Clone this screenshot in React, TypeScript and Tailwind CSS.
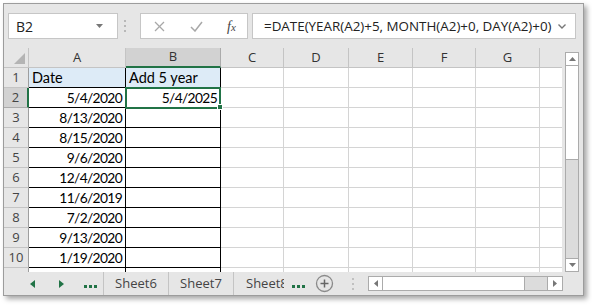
import React from "react";

const COLS = [
  { w: 25, label: "" },
  { w: 97, label: "A" },
  { w: 95, label: "B" },
  { w: 63, label: "C" },
  { w: 65, label: "D" },
  { w: 64, label: "E" },
  { w: 63, label: "F" },
  { w: 64, label: "G" },
  { w: 22, label: "" },
];

const DATES = [
  "5/4/2020",
  "8/13/2020",
  "8/15/2020",
  "9/6/2020",
  "12/4/2020",
  "11/6/2019",
  "7/2/2020",
  "9/13/2020",
  "1/19/2020",
];

const cellFont = { fontFamily: "Lato, 'Liberation Sans', sans-serif" };
const uiFont = { fontFamily: "'Open Sans', 'Noto Sans', sans-serif" };

function ColHeaders() {
  return (
    <div className="flex h-[20px]" style={uiFont}>
      {COLS.map((c, i) => {
        const sel = i === 2;
        return (
          <div
            key={i}
            style={{ width: c.w }}
            className={`relative flex shrink-0 items-center justify-center border-r border-b text-[13px] text-[#333] ${
              sel
                ? "bg-[#d2d2d2] border-b-[#217346] border-b-2 border-r-[#ababab]"
                : "bg-[#e6e6e6] border-[#c4c4c4]"
            } ${i === 8 ? "border-r-0" : ""}`}
          >
            {i === 0 ? (
              <svg width="11" height="11" viewBox="0 0 11 11" className="absolute bottom-[3px] right-[3px]">
                <polygon points="11,0 11,11 0,11" fill="#b4b4b4" />
              </svg>
            ) : (
              c.label
            )}
          </div>
        );
      })}
    </div>
  );
}

function Row({ n }: { n: number }) {
  const selRow = n === 2;
  return (
    <div className="flex h-[20px]">
      {COLS.map((c, i) => {
        if (i === 0) {
          return (
            <div
              key={i}
              style={{ width: c.w, ...uiFont }}
              className={`flex shrink-0 items-center justify-center border-b border-r text-[13px] text-[#444] ${
                selRow
                  ? "bg-[#d2d2d2] border-b-[#ababab] border-r-[#217346] border-r-2"
                  : "bg-[#e6e6e6] border-b-[#c4c4c4] border-r-[#9e9e9e]"
              }`}
            >
              {n}
            </div>
          );
        }
        const inRange = i === 1 || i === 2;
        let content: React.ReactNode = null;
        let align = "justify-end";
        let isDate = true;
        if (n === 1 && i === 1) {
          content = "Date";
          align = "justify-start";
          isDate = false;
        } else if (n === 1 && i === 2) {
          content = "Add 5 year";
          align = "justify-start";
          isDate = false;
        } else if (i === 1) {
          content = DATES[n - 2];
        } else if (n === 2 && i === 2) {
          content = "5/4/2025";
        }
        return (
          <div
            key={i}
            style={{ width: c.w, ...cellFont }}
            className={`flex shrink-0 items-center px-[3px] pt-[1px] text-black border-b border-r ${align} ${
              isDate ? "text-[13.8px] tracking-[-0.65px]" : "text-[14.5px]"
            } ${inRange ? "border-black" : "border-[#d4d4d4]"} ${
              n === 1 && inRange ? "bg-[#ddebf7]" : "bg-white"
            } ${i === 8 ? "border-r-0" : ""}`}
          >
            {content}
          </div>
        );
      })}
    </div>
  );
}

function PartialRow() {
  return (
    <div className="flex h-[4px]">
      {COLS.map((c, i) => (
        <div
          key={i}
          style={{ width: c.w }}
          className={`shrink-0 border-r ${
            i === 0 ? "bg-[#e6e6e6] border-[#9e9e9e]" : i <= 2 ? "bg-white border-black" : "bg-white border-[#d4d4d4]"
          } ${i === 8 ? "border-r-0" : ""}`}
        />
      ))}
    </div>
  );
}

function VScroll() {
  return (
    <div className="mt-[4px] flex h-[220px] w-[14px] flex-col bg-[#dcdcdc] border border-[#ababab]">
      <div className="flex h-[13px] items-center justify-center bg-white border-b border-[#ababab]">
        <svg width="7" height="4" viewBox="0 0 7 4">
          <polygon points="0,4 7,4 3.5,0" fill="#777" />
        </svg>
      </div>
      <div className="h-[94px] bg-white border-b border-[#ababab]" />
      <div className="flex-1" />
      <div className="flex h-[13px] items-center justify-center bg-white border-t border-[#ababab]">
        <svg width="7" height="4" viewBox="0 0 7 4">
          <polygon points="0,0 7,0 3.5,4" fill="#777" />
        </svg>
      </div>
    </div>
  );
}

function Dots({ color = "#b8b8b8" }: { color?: string }) {
  return (
    <div className="flex flex-col gap-[3px]">
      <div className="h-[2px] w-[2px]" style={{ background: color }} />
      <div className="h-[2px] w-[2px]" style={{ background: color }} />
      <div className="h-[2px] w-[2px]" style={{ background: color }} />
    </div>
  );
}

function GreenEllipsis() {
  return (
    <div className="flex gap-[2px]">
      <div className="h-[3px] w-[3px] bg-[#217346]" />
      <div className="h-[3px] w-[3px] bg-[#217346]" />
      <div className="h-[3px] w-[3px] bg-[#217346]" />
    </div>
  );
}

function TabBar() {
  return (
    <div className="flex h-[23px] items-center bg-[#e6e6e6] text-[13px] text-[#444]" style={uiFont}>
      <div className="flex h-full w-[99px] shrink-0 items-center">
        <svg width="5" height="8" viewBox="0 0 5 8" className="ml-[26px]">
          <polygon points="5,0 5,8 0,4" fill="#217346" />
        </svg>
        <svg width="5" height="8" viewBox="0 0 5 8" className="ml-[24px]">
          <polygon points="0,0 0,8 5,4" fill="#217346" />
        </svg>
        <div className="ml-[20px] mt-[6px]">
          <GreenEllipsis />
        </div>
      </div>
      <div className="h-full w-px bg-[#c4c4c4]" />
      <div className="flex h-full w-[64px] items-center justify-center">Sheet6</div>
      <div className="h-full w-px bg-[#c4c4c4]" />
      <div className="flex h-full w-[64px] items-center justify-center">Sheet7</div>
      <div className="h-full w-px bg-[#c4c4c4]" />
      <div className="flex h-full w-[50px] shrink-0 items-center overflow-hidden pl-[12px]">
        <span className="whitespace-nowrap">Sheet8</span>
      </div>
      <div className="ml-[8px] mt-[6px]">
        <GreenEllipsis />
      </div>
      <svg width="19" height="19" viewBox="0 0 19 19" className="ml-[10px]">
        <circle cx="9.5" cy="9.5" r="8" fill="none" stroke="#8a8a8a" strokeWidth="1.3" />
        <line x1="5.5" y1="9.5" x2="13.5" y2="9.5" stroke="#666" strokeWidth="1.5" />
        <line x1="9.5" y1="5.5" x2="9.5" y2="13.5" stroke="#666" strokeWidth="1.5" />
      </svg>
      <div className="ml-[18px]">
        <Dots color="#c0c0c0" />
      </div>
      <div className="ml-[14px] flex h-[15px] w-[195px] border border-[#ababab] bg-[#dcdcdc]">
        <div className="flex w-[14px] items-center justify-center border-r border-[#ababab] bg-white">
          <svg width="4" height="7" viewBox="0 0 4 7">
            <polygon points="4,0 4,7 0,3.5" fill="#777" />
          </svg>
        </div>
        <div className="w-[142px] border-r border-[#ababab] bg-white" />
        <div className="flex-1" />
        <div className="flex w-[15px] items-center justify-center border-l border-[#ababab] bg-white">
          <svg width="4" height="7" viewBox="0 0 4 7">
            <polygon points="0,0 0,7 4,3.5" fill="#777" />
          </svg>
        </div>
      </div>
    </div>
  );
}

export default function App() {
  return (
    <div className="h-[306px] w-[592px] overflow-hidden bg-white">
      <div className="ml-[3px] mt-[3px] flex h-[293px] w-[581px] flex-col border border-[#9c9c9c] bg-[#e6e6e6] shadow-[3px_3px_5px_rgba(0,0,0,0.35)]">
        {/* formula bar */}
        <div className="flex h-[44px] items-start pl-[4px] pt-[9px]" style={uiFont}>
          <div className="flex h-[26px] w-[110px] items-center justify-between border border-[#c6c6c6] bg-white pl-[7px] pr-[14px] text-[14px] text-[#222]">
            <span>B2</span>
            <svg width="7" height="4" viewBox="0 0 7 4">
              <polygon points="0,0 7,0 3.5,4" fill="#777" />
            </svg>
          </div>
          <div className="ml-[6px] mt-[7px]">
            <Dots />
          </div>
          <div className="ml-[14px] flex h-[26px] w-[108px] items-center border border-[#c6c6c6] bg-white">
            <svg width="11" height="11" viewBox="0 0 11 11" className="ml-[13px]">
              <line x1="1" y1="1" x2="10" y2="10" stroke="#a8a8a8" strokeWidth="1.3" />
              <line x1="10" y1="1" x2="1" y2="10" stroke="#a8a8a8" strokeWidth="1.3" />
            </svg>
            <svg width="13" height="11" viewBox="0 0 13 11" className="ml-[25px]">
              <polyline points="1,6 5,10 12,1" fill="none" stroke="#a8a8a8" strokeWidth="1.5" />
            </svg>
            <span
              className="ml-[24px] text-[14px] italic text-[#444]"
              style={{ fontFamily: "'Liberation Serif', 'DejaVu Serif', serif" }}
            >
              f<span className="text-[11px]">x</span>
            </span>
          </div>
          <div className="ml-[4px] flex h-[26px] w-[324px] items-center justify-between border border-[#c6c6c6] bg-white pl-[11px] pr-[9px] text-[13.4px] text-[#222]">
            <span className="whitespace-nowrap">=DATE(YEAR(A2)+5, MONTH(A2)+0, DAY(A2)+0)</span>
            <svg width="8" height="5" viewBox="0 0 8 5">
              <polyline points="0.5,0.5 4,4 7.5,0.5" fill="none" stroke="#777" strokeWidth="1.4" />
            </svg>
          </div>
        </div>
        {/* grid */}
        <div className="flex">
          <div className="relative w-[558px] bg-white">
            <ColHeaders />
            {Array.from({ length: 10 }, (_, k) => (
              <Row key={k} n={k + 1} />
            ))}
            <PartialRow />
            {/* active cell B2 */}
            <div className="pointer-events-none absolute left-[121px] top-[39px] h-[22px] w-[96px] border-2 border-[#217346]" />
            <div className="pointer-events-none absolute left-[213px] top-[56px] h-[6px] w-[6px] border border-white bg-[#217346]" />
          </div>
          <div className="ml-[3px]">
            <VScroll />
          </div>
        </div>
        <TabBar />
      </div>
    </div>
  );
}
